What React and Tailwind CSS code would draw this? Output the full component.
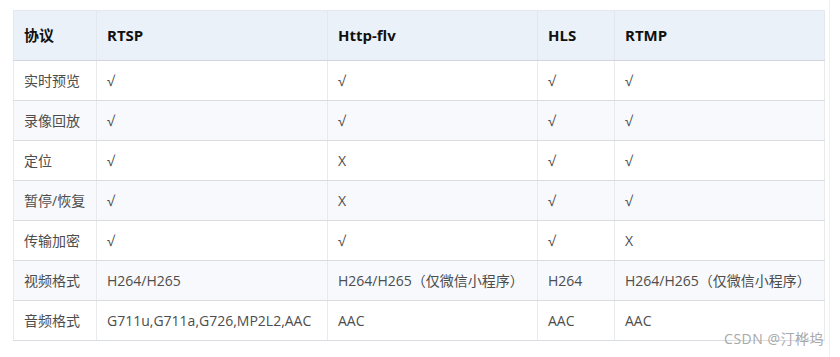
import React from "react";

const cols = ["协议", "RTSP", "Http-flv", "HLS", "RTMP"];
const widths = ["w-[83px]", "w-[231px]", "w-[210px]", "w-[77px]", "w-[210px]"];

const rows = [
  ["实时预览", "√", "√", "√", "√"],
  ["录像回放", "√", "√", "√", "√"],
  ["定位", "√", "X", "√", "√"],
  ["暂停/恢复", "√", "X", "√", "√"],
  ["传输加密", "√", "√", "√", "X"],
  ["视频格式", "H264/H265", "H264/H265（仅微信小程序）", "H264", "H264/H265（仅微信小程序）"],
  ["音频格式", "G711u,G711a,G726,MP2L2,AAC", "AAC", "AAC", "AAC"],
];

export default function App() {
  return (
    <div
      className="relative w-[840px] h-[357px] bg-white overflow-hidden"
      style={{ fontFamily: '"Open Sans", "Noto Sans CJK SC", sans-serif' }}
    >
      <div className="pt-[10px] pl-[13px]">
        <table className="border-collapse table-fixed w-[812px] text-[14px]">
          <thead>
            <tr className="h-[50px] bg-[#eaf1f9]">
              {cols.map((c, i) => (
                <th
                  key={i}
                  className={`${widths[i]} text-left font-bold text-[15px] text-[#111] px-[10px] border border-[#e4e8ee] border-b-[#d2d6dc]`}
                >
                  {c}
                </th>
              ))}
            </tr>
          </thead>
          <tbody>
            {rows.map((r, ri) => (
              <tr key={ri} className={`h-[40px] ${ri % 2 === 1 ? "bg-[#f7f9fc]" : "bg-white"}`}>
                {r.map((cell, ci) => (
                  <td
                    key={ci}
                    className="px-[10px] text-[#4d4d4d] whitespace-nowrap border-x border-x-[#e8eaed] border-y border-y-[#d9dce0]"
                  >
                    {cell}
                  </td>
                ))}
              </tr>
            ))}
          </tbody>
        </table>
      </div>
      <div className="absolute top-0 bottom-0 left-[829px] w-px bg-[#f0f0f0]" />
      <div className="absolute right-[16px] top-[328px] text-[14px] text-[#a8a8a8] tracking-[0.5px]">
        CSDN @汀桦坞
      </div>
    </div>
  );
}
